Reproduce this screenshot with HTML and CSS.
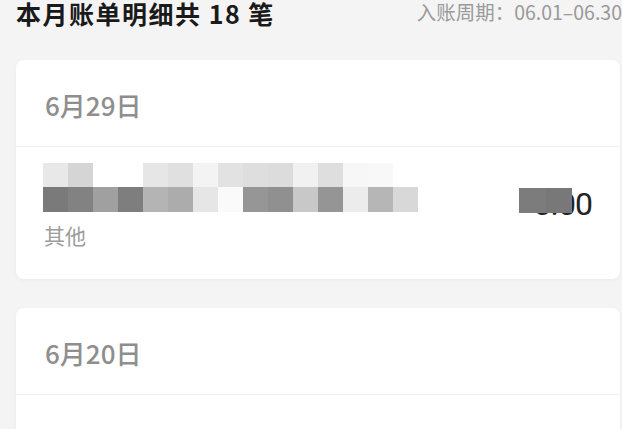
FILE: index.html
```html
<!DOCTYPE html>
<html lang="zh-CN">
<head>
<meta charset="utf-8">
<title>本月账单明细</title>
<link rel="stylesheet" href="styles.css">
</head>
<body>
<div class="page">
  <div class="summary">
    <div class="summary-title">本月账单明细共 18 笔</div>
    <div class="summary-period">入账周期：06.01–06.30</div>
  </div>

  <div class="card">
    <div class="card-date">6月29日</div>
    <div class="bill">
      <div class="bill-main">
        <div class="mosaic">
          <div class="mosaic-row">
            <span class="cell" style="background:#e8e8e8"></span>
            <span class="cell" style="background:#d5d5d5"></span>
            <span class="cell" style="background:#ffffff"></span>
            <span class="cell" style="background:#ffffff"></span>
            <span class="cell" style="background:#e6e6e6"></span>
            <span class="cell" style="background:#e0e0e0"></span>
            <span class="cell" style="background:#f3f3f3"></span>
            <span class="cell" style="background:#e2e2e2"></span>
            <span class="cell" style="background:#dedede"></span>
            <span class="cell" style="background:#dcdcdc"></span>
            <span class="cell" style="background:#f1f1f1"></span>
            <span class="cell" style="background:#dedede"></span>
            <span class="cell" style="background:#f7f7f7"></span>
            <span class="cell" style="background:#f8f8f8"></span>
            <span class="cell" style="background:#ffffff"></span>
          </div>
          <div class="mosaic-row">
            <span class="cell" style="background:#7a7a7a"></span>
            <span class="cell" style="background:#828282"></span>
            <span class="cell" style="background:#a0a0a0"></span>
            <span class="cell" style="background:#7e7e7e"></span>
            <span class="cell" style="background:#b4b4b4"></span>
            <span class="cell" style="background:#acacac"></span>
            <span class="cell" style="background:#e6e6e6"></span>
            <span class="cell" style="background:#fafafa"></span>
            <span class="cell" style="background:#969696"></span>
            <span class="cell" style="background:#909090"></span>
            <span class="cell" style="background:#c8c8c8"></span>
            <span class="cell" style="background:#959595"></span>
            <span class="cell" style="background:#ececec"></span>
            <span class="cell" style="background:#b6b6b6"></span>
            <span class="cell" style="background:#d8d8d8"></span>
          </div>
        </div>
        <div class="bill-category">其他</div>
      </div>
      <div class="bill-amount">
        <span class="amount-text">0.00</span>
        <span class="amount-mask">
          <span class="mask-cell" style="background:#7c7c7c"></span>
          <span class="mask-cell" style="background:#787878"></span>
        </span>
      </div>
    </div>
  </div>

  <div class="card">
    <div class="card-date">6月20日</div>
    <div class="bill">
      <div class="bill-main">
        <div class="bill-category">&nbsp;</div>
      </div>
    </div>
  </div>
</div>
</body>
</html>
```

FILE: styles.css
```css
html, body {
  margin: 0;
  padding: 0;
  background: #f4f4f4;
}

body {
  font-family: "Noto Sans CJK SC", "Noto Sans", sans-serif;
  width: 622px;
  height: 429px;
  overflow: hidden;
}

.page {
  padding: 0 2px 0 16px;
}

.summary {
  display: flex;
  justify-content: space-between;
  align-items: flex-start;
  height: 60px;
  margin-right: -2px;
}

.summary-title {
  font-size: 25px;
  line-height: 27px;
  font-weight: 700;
  color: #1a1a1a;
  letter-spacing: 1.5px;
  white-space: nowrap;
}

.summary-period {
  font-size: 19.5px;
  line-height: 24px;
  color: #9a9a9a;
  white-space: nowrap;
}

.card {
  background: #ffffff;
  border-radius: 8px;
  box-shadow: 0 1px 4px rgba(0, 0, 0, 0.04);
  margin-bottom: 29px;
}

.card-date {
  height: 87px;
  box-sizing: border-box;
  padding: 3px 28px 0 29px;
  display: flex;
  align-items: center;
  font-size: 26px;
  font-weight: 500;
  color: #8e8e8e;
  border-bottom: 1px solid #f0f0f0;
}

.bill {
  display: flex;
  justify-content: space-between;
  align-items: flex-start;
  padding: 16px 28px 30px 27px;
}

.mosaic {
  display: flex;
  flex-direction: column;
}

.mosaic-row {
  display: flex;
}

.mosaic-row:first-child .cell {
  height: 24px;
}

.cell {
  display: block;
  width: 25px;
  height: 25px;
}

.bill-category {
  margin-top: 9px;
  font-size: 21px;
  line-height: 28px;
  color: #9c9c9c;
  padding-left: 1px;
}

.bill-amount {
  position: relative;
  margin-top: 24px;
  font-family: Roboto, "Noto Sans", sans-serif;
  font-size: 32px;
  line-height: 28px;
  color: #222222;
  letter-spacing: -1px;
}

.amount-text {
  display: block;
  padding-top: 3px;
}

.amount-mask {
  position: absolute;
  top: 1px;
  right: 20px;
  display: flex;
}

.mask-cell {
  display: block;
  width: 27px;
  height: 25px;
}

.mask-cell + .mask-cell {
  width: 26px;
}
```
